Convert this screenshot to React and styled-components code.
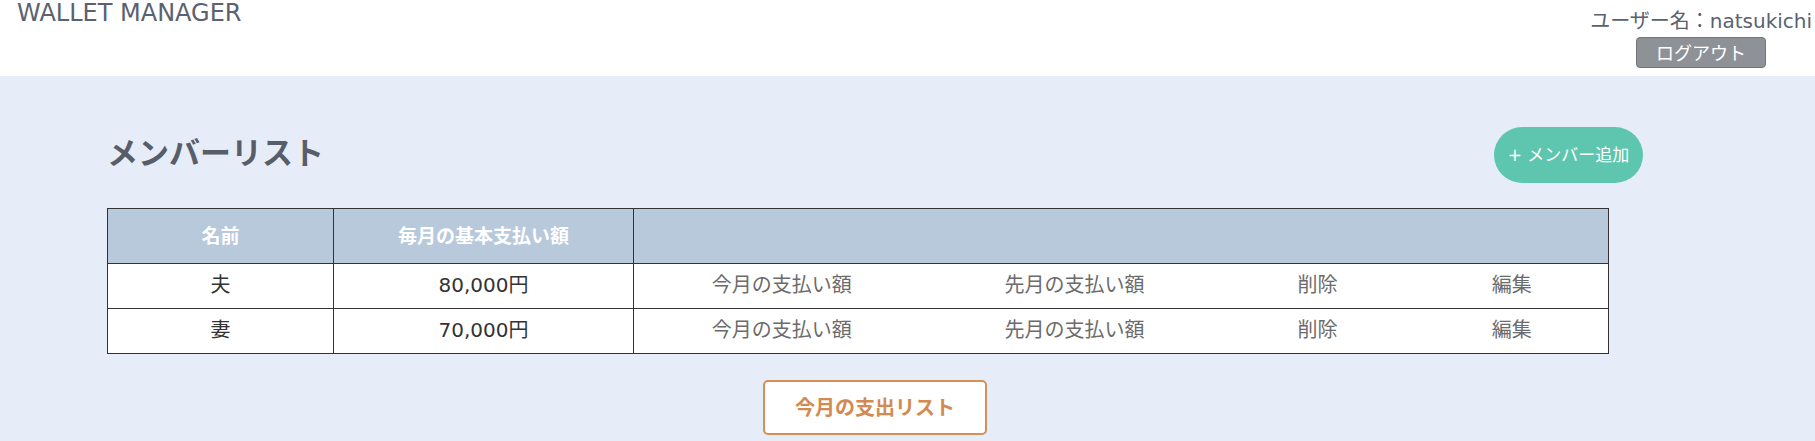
import React from 'react'
import styled, { createGlobalStyle } from 'styled-components'

const GlobalStyle = createGlobalStyle`
  body {
    margin: 0;
    font-family: "DejaVu Sans", "Noto Sans CJK JP", sans-serif;
    color: #333;
  }
`

const members = [
  { name: '夫', base: '80,000円' },
  { name: '妻', base: '70,000円' },
]

const colWidths = [226, 300, 296, 290, 196, 193]

const App = () => {
  return (
    <>
      <GlobalStyle />
      <Header>
        <Logo>WALLET MANAGER</Logo>
        <UserBox>
          <UserName>ユーザー名：natsukichi</UserName>
          <LogoutButton>ログアウト</LogoutButton>
        </UserBox>
      </Header>
      <Main>
        <Container>
          <TitleRow>
            <Title>メンバーリスト</Title>
            <AddButton>+ メンバー追加</AddButton>
          </TitleRow>
          <Table>
            <colgroup>
              {colWidths.map((w, i) => <Col key={i} $w={w} />)}
            </colgroup>
            <thead>
              <tr>
                <Th $divider>名前</Th>
                <Th $divider>毎月の基本支払い額</Th>
                <Th colSpan={4}></Th>
              </tr>
            </thead>
            <tbody>
              {members.map((m) => (
                <tr key={m.name}>
                  <Td $divider>{m.name}</Td>
                  <Td $divider>{m.base}</Td>
                  <Td $link>今月の支払い額</Td>
                  <Td $link>先月の支払い額</Td>
                  <Td $link>削除</Td>
                  <Td $link>編集</Td>
                </tr>
              ))}
            </tbody>
          </Table>
          <Footer>
            <ListButton>今月の支出リスト</ListButton>
          </Footer>
        </Container>
      </Main>
    </>
  )
}

const Header = styled.header`
  display: flex;
  justify-content: space-between;
  align-items: flex-start;
  height: 76px;
  background: #fff;
`

const Logo = styled.h1`
  margin: 0;
  padding-left: 17px;
  font-size: 24px;
  font-weight: normal;
  line-height: 26px;
  color: #5a6170;
`

const UserBox = styled.div`
  display: flex;
  flex-direction: column;
  align-items: center;
  padding: 9px 3px 0 0;
`

const UserName = styled.div`
  font-size: 20px;
  line-height: 24px;
  color: #5a6170;
`

const LogoutButton = styled.button`
  margin-top: 4px;
  width: 130px;
  height: 31px;
  padding: 0 0 2px;
  background: #8e9196;
  border: 1px solid #72757a;
  border-radius: 4px;
  color: #fff;
  font-family: inherit;
  font-size: 18px;
`

const Main = styled.main`
  background: #e6edf8;
  min-height: calc(100vh - 76px);
  padding: 51px 0 20px 107px;
  box-sizing: border-box;
`

const Container = styled.div`
  width: 1536px;
`

const TitleRow = styled.div`
  display: flex;
  justify-content: space-between;
  align-items: center;
`

const Title = styled.h2`
  margin: 0;
  padding-bottom: 9px;
  font-size: 31px;
  font-weight: bold;
  color: #585e69;
`

const AddButton = styled.button`
  width: 149px;
  height: 56px;
  padding: 0 0 4px;
  background: #5ec6ae;
  border: none;
  border-radius: 28px;
  color: #fff;
  font-family: inherit;
  font-size: 17px;
`

const Table = styled.table`
  margin-top: 25px;
  width: 1501px;
  table-layout: fixed;
  border-collapse: collapse;
  border: 1px solid #333;
  background: #fff;
`

const Col = styled.col`
  width: ${(p) => p.$w}px;
`

const Th = styled.th`
  box-sizing: border-box;
  height: 55px;
  padding: 0 0 4px;
  background: #b7c9db;
  color: #fff;
  font-size: 19px;
  font-weight: bold;
  text-align: center;
  border-bottom: 1px solid #333;
  border-right: ${(p) => (p.$divider ? '1px solid #333' : 'none')};
`

const Td = styled.td`
  box-sizing: border-box;
  height: 45px;
  padding: 0 0 5px;
  font-size: 20px;
  text-align: center;
  color: ${(p) => (p.$link ? '#6b6b6b' : '#333')};
  border-bottom: 1px solid #333;
  border-right: ${(p) => (p.$divider ? '1px solid #333' : 'none')};
`

const Footer = styled.div`
  display: flex;
  justify-content: center;
  margin-top: 26px;
`

const ListButton = styled.button`
  width: 224px;
  height: 55px;
  padding: 0 0 3px;
  background: #fff;
  border: 2px solid #d68f57;
  border-radius: 5px;
  color: #d38a50;
  font-family: inherit;
  font-size: 20px;
  font-weight: bold;
`

export default App
